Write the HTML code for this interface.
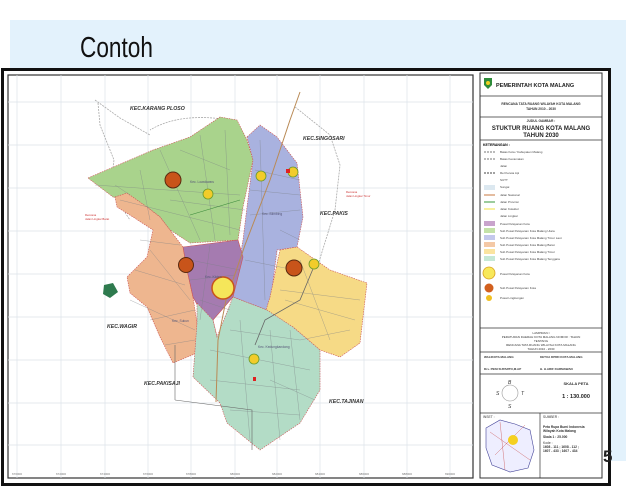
<!DOCTYPE html>
<html><head><meta charset="utf-8"><style>
html,body{margin:0;padding:0;background:#fff;width:638px;height:493px;overflow:hidden;position:relative;font-family:"Liberation Sans",sans-serif}
.panel{position:absolute;left:10px;top:20px;width:616px;height:441px;background:#e3f2fc}
.title{position:absolute;left:80px;top:32px;font-size:29px;color:#111;transform:scaleX(.78);transform-origin:left top;letter-spacing:0}
.num{position:absolute;left:603px;top:447px;font-size:17px;font-weight:bold;color:#222}
.frame{position:absolute;left:1px;top:68px;width:604px;height:412px;border:3px solid #111;background:#fff}
svg{position:absolute;left:0;top:0}
</style></head><body>
<div class="panel"></div>
<div class="title">Contoh</div>
<div class="frame"></div>
<div class="num">5</div>
<svg width="638" height="493" viewBox="0 0 638 493" font-family="Liberation Sans, sans-serif">
<rect x="8" y="75" width="465" height="403" fill="#fff" stroke="#333" stroke-width="1.2"/>
<g stroke="#dde3e8" stroke-width="0.7">
<line x1="17" y1="75" x2="17" y2="478"/><line x1="61" y1="75" x2="61" y2="478"/><line x1="105" y1="75" x2="105" y2="478"/><line x1="148" y1="75" x2="148" y2="478"/><line x1="191" y1="75" x2="191" y2="478"/><line x1="235" y1="75" x2="235" y2="478"/><line x1="277" y1="75" x2="277" y2="478"/><line x1="320" y1="75" x2="320" y2="478"/><line x1="364" y1="75" x2="364" y2="478"/><line x1="407" y1="75" x2="407" y2="478"/><line x1="450" y1="75" x2="450" y2="478"/>
<line x1="8" y1="102" x2="473" y2="102"/><line x1="8" y1="145" x2="473" y2="145"/><line x1="8" y1="188" x2="473" y2="188"/><line x1="8" y1="231" x2="473" y2="231"/><line x1="8" y1="274" x2="473" y2="274"/><line x1="8" y1="317" x2="473" y2="317"/><line x1="8" y1="360" x2="473" y2="360"/><line x1="8" y1="403" x2="473" y2="403"/><line x1="8" y1="445" x2="473" y2="445"/>
</g>
<g font-size="3" fill="#777"><text x="12" y="475">670000</text><text x="56" y="475">672000</text><text x="100" y="475">674000</text><text x="143" y="475">676000</text><text x="186" y="475">678000</text><text x="230" y="475">680000</text><text x="272" y="475">682000</text><text x="315" y="475">684000</text><text x="359" y="475">686000</text><text x="402" y="475">688000</text><text x="445" y="475">690000</text></g>
<g fill="none" stroke="#aaa" stroke-width="0.8" stroke-dasharray="2 1">
<path d="M98 103 L100 125 L114 160 L110 190 L130 220"/>
<path d="M295 107 L330 135 L340 165 L335 210 L318 265 L300 300"/>
<path d="M230 120 Q180 112 150 130"/>
<path d="M95 100 L120 118 L150 135"/>
</g>
<polygon points="88,178 153,150 190,137 220,117 237,120 247,140 253,160 243,207 238,240 190,243 170,230 160,217 147,207 113,197" fill="#a9d38c" stroke="#c55" stroke-width="0.6" stroke-dasharray="1.5 1"/>
<polygon points="247,137 260,125 277,137 297,163 303,217 297,247 277,250 272,290 267,310 233,297 243,240 247,207 253,160" fill="#a9b2df" stroke="#c55" stroke-width="0.6" stroke-dasharray="1.5 1"/>
<polygon points="115,197 127,193 147,207 160,217 170,230 183,247 187,270 193,297 197,323 197,353 173,363 160,337 147,307 130,293 127,277 147,257 153,230 133,217 117,207" fill="#eeb68f" stroke="#c55" stroke-width="0.6" stroke-dasharray="1.5 1"/>
<polygon points="183,247 238,240 243,257 233,297 213,320 217,337 207,323 193,297 187,270" fill="#a57bb0" stroke="#c55" stroke-width="0.6"/>
<polygon points="280,250 297,247 330,270 367,283 360,343 340,357 320,350 293,327 263,320 270,297" fill="#f6da86" stroke="#c55" stroke-width="0.6" stroke-dasharray="1.5 1"/>
<polygon points="197,303 213,320 217,337 233,297 267,310 293,327 320,350 320,390 300,423 260,450 227,423 220,403 193,377 197,323" fill="#b3dcc6" stroke="#c55" stroke-width="0.6" stroke-dasharray="1.5 1"/>
<polygon points="104,285 113,283 118,292 110,298 103,294" fill="#2e7a4e"/>
<g stroke="#7a7f84" stroke-width="0.4" fill="none" opacity="0.75">
<path d="M95 185 L240 195 M120 200 L240 230 M160 150 L200 240 M200 135 L215 240 M255 170 L300 180 M250 215 L300 210 M190 260 L240 270 M210 245 L200 320 M280 290 L360 300 M300 260 L330 340 M210 350 L310 370 M240 320 L250 440 M150 250 L190 300 M130 300 L195 330 M270 380 L315 400 M230 330 L300 340"/>
<path d="M140 170 L150 220 M180 150 L230 170 M170 200 L245 210 M225 130 L230 235 M260 140 L265 300 M250 190 L300 195 M245 260 L295 270 M280 230 L300 240 M140 240 L180 245 M135 270 L185 285 M150 320 L195 310 M165 345 L195 340 M285 300 L355 320 M300 340 L350 330 M210 380 L300 390 M230 410 L300 415 M270 330 L280 440 M290 330 L300 420 M115 185 L130 195 M190 280 L235 275 M200 300 L230 310"/>
</g>
<path d="M300 92 L290 120 L270 180 L245 245 L226 300 L218 340 L216 402" fill="none" stroke="#b98a55" stroke-width="1"/>
<path d="M175 345 L175 400 M175 400 L252 410 L252 450" fill="none" stroke="#666" stroke-width="0.6"/>
<path d="M255 345 L265 320 L300 300 L315 264" fill="none" stroke="#666" stroke-width="0.8"/>
<path d="M190 215 L240 200" fill="none" stroke="#3a8a3a" stroke-width="0.6"/>
<g stroke="#5a2a10" stroke-width="1"><circle cx="173" cy="180" r="8" fill="#c8541a"/><circle cx="186" cy="265" r="7.5" fill="#c8541a"/><circle cx="294" cy="268" r="8" fill="#c8541a"/></g>
<circle cx="223" cy="288" r="11" fill="#f5e65a" stroke="#c8541a" stroke-width="1.5"/>
<g fill="#f2cc2a" stroke="#6a9a2a" stroke-width="0.8"><circle cx="208" cy="194" r="5"/><circle cx="261" cy="176" r="5"/><circle cx="293" cy="172" r="5"/><circle cx="314" cy="264" r="5"/><circle cx="254" cy="359" r="5"/></g>
<rect x="286" y="169" width="4" height="4" fill="#e02020"/><rect x="253" y="377" width="3" height="4" fill="#e02020"/>
<g font-size="5.2" font-style="italic" font-weight="bold" fill="#333"><text x="130" y="110">KEC.KARANG PLOSO</text><text x="303" y="140">KEC.SINGOSARI</text><text x="320" y="215">KEC.PAKIS</text><text x="107" y="328">KEC.WAGIR</text><text x="144" y="385">KEC.PAKISAJI</text><text x="329" y="403">KEC.TAJINAN</text></g>
<g font-size="3.3" fill="#557"><text x="190" y="183">Kec. Lowokwaru</text><text x="262" y="215">Kec. Blimbing</text><text x="205" y="278">Kec. Klojen</text><text x="172" y="322">Kec. Sukun</text><text x="258" y="348">Kec. Kedungkandang</text></g>
<g font-size="2.8" fill="#c33"><text x="85" y="216">Rencana</text><text x="85" y="220">Jalan Lingkar Barat</text><text x="346" y="193">Rencana</text><text x="346" y="197">Jalan Lingkar Timur</text></g>
<rect x="480" y="73" width="122" height="405" fill="#fff" stroke="#333" stroke-width="1"/>
<g stroke="#333" stroke-width="0.7"><line x1="480" y1="96" x2="602" y2="96"/><line x1="480" y1="117" x2="602" y2="117"/><line x1="480" y1="140" x2="602" y2="140"/><line x1="480" y1="328" x2="602" y2="328"/><line x1="480" y1="352" x2="602" y2="352"/><line x1="480" y1="374" x2="602" y2="374"/><line x1="480" y1="413" x2="602" y2="413"/><line x1="540" y1="413" x2="540" y2="478"/></g>
<path d="M484 78 h8 v7 l-4 4 l-4 -4 z" fill="#2e8b3a"/><circle cx="488" cy="83" r="2" fill="#f0d020"/>
<text x="496" y="87" font-size="5.5" font-weight="bold" fill="#222">PEMERINTAH KOTA MALANG</text>
<g font-size="3.3" font-weight="bold" fill="#333" text-anchor="middle"><text x="541" y="105">RENCANA TATA RUANG WILAYAH KOTA MALANG</text><text x="541" y="110">TAHUN 2010 - 2030</text><text x="541" y="122">JUDUL GAMBAR :</text></g>
<g font-size="6" font-weight="bold" fill="#222" text-anchor="middle"><text x="541" y="130">STUKTUR RUANG KOTA MALANG</text><text x="541" y="137">TAHUN 2030</text></g>
<text x="483" y="146" font-size="3.5" font-weight="bold">KETERANGAN :</text>
<g font-size="3" fill="#444"><text x="500" y="153">Batas Kota / Kabupaten Malang</text><text x="500" y="160">Batas Kecamatan</text><text x="500" y="167">Jalan</text><text x="500" y="174">Rel Kereta Api</text><text x="500" y="181">SUTT</text><text x="500" y="188">Sungai</text><text x="500" y="196">Jalan Nasional</text><text x="500" y="203">Jalan Provinsi</text><text x="500" y="210">Jalan Kolektor</text><text x="500" y="217">Jalan Lingkar</text><text x="500" y="225">Pusat Pelayanan Kota</text><text x="500" y="232">Sub Pusat Pelayanan Kota Malang Utara</text><text x="500" y="239">Sub Pusat Pelayanan Kota Malang Timur Laut</text><text x="500" y="246">Sub Pusat Pelayanan Kota Malang Barat</text><text x="500" y="253">Sub Pusat Pelayanan Kota Malang Timur</text><text x="500" y="260">Sub Pusat Pelayanan Kota Malang Tenggara</text><text x="500" y="275">Pusat Pelayanan Kota</text><text x="500" y="289">Sub Pusat Pelayanan Kota</text><text x="500" y="299">Pusat Lingkungan</text></g>
<g stroke-width="1"><line x1="484" y1="152" x2="495" y2="152" stroke="#777" stroke-dasharray="2 1"/><line x1="484" y1="159" x2="495" y2="159" stroke="#777" stroke-dasharray="2 1"/><line x1="484" y1="173" x2="495" y2="173" stroke="#444" stroke-dasharray="2 1"/><line x1="484" y1="195" x2="495" y2="195" stroke="#c87a40"/><line x1="484" y1="202" x2="495" y2="202" stroke="#3a9a3a"/><line x1="484" y1="209" x2="495" y2="209" stroke="#f0e040"/></g>
<rect x="484" y="185" width="11" height="5" fill="#dce8f0"/>
<rect x="484" y="221" width="11" height="5" fill="#c9a4cc"/><rect x="484" y="228" width="11" height="5" fill="#c4e2a8"/><rect x="484" y="235" width="11" height="5" fill="#c4c8ec"/><rect x="484" y="242" width="11" height="5" fill="#f4c9a6"/><rect x="484" y="249" width="11" height="5" fill="#fbe4a0"/><rect x="484" y="256" width="11" height="5" fill="#c6e8d6"/>
<circle cx="489" cy="273" r="6" fill="#f8e85a" stroke="#d9a020" stroke-width="0.8"/><circle cx="489" cy="288" r="4.5" fill="#d2601e"/><circle cx="489" cy="298" r="3" fill="#f0c020"/>
<g font-size="3" fill="#333" text-anchor="middle"><text x="541" y="334">LAMPIRAN I</text><text x="541" y="338">PERATURAN DAERAH KOTA MALANG NOMOR : TAHUN</text><text x="541" y="342">TENTANG</text><text x="541" y="346">RENCANA TATA RUANG WILAYAH KOTA MALANG</text><text x="541" y="350">TAHUN 2010 - 2030</text></g>
<g font-size="3" font-weight="bold" fill="#333"><text x="484" y="358">WALIKOTA MALANG</text><text x="540" y="358">KETUA DPRD KOTA MALANG</text><text x="484" y="370">Drs. PENI SUPARTO,M.AP</text><text x="540" y="370">H. H.ARIF DARMAWAN</text></g>
<circle cx="510" cy="393" r="8" fill="none" stroke="#999" stroke-width="0.6"/>
<g font-size="5" font-style="italic" fill="#333"><text x="508" y="384">B</text><text x="496" y="395">S</text><text x="521" y="395">T</text><text x="508" y="408">S</text></g>
<text x="576" y="385" font-size="4" font-weight="bold" fill="#333" text-anchor="middle">SKALA PETA</text>
<text x="576" y="398" font-size="5.5" font-weight="bold" fill="#222" text-anchor="middle">1 : 130.000</text>
<path d="M486 428 L500 420 L515 424 L530 430 L534 450 L528 468 L510 472 L492 465 L486 448 Z" fill="#eef" stroke="#449" stroke-width="0.6"/><path d="M490 432 L530 460 M495 455 L525 425 M500 422 L505 470" stroke="#c55" stroke-width="0.4" fill="none"/><circle cx="513" cy="440" r="5" fill="#f5d020"/>
<g font-size="3.3" fill="#333"><text x="483" y="418">INSET :</text><text x="543" y="418">SUMBER :</text><text x="543" y="428" font-weight="bold">Peta Rupa Bumi Indonesia</text><text x="543" y="432" font-weight="bold">Wilayah Kota Malang</text><text x="543" y="438" font-weight="bold">Skala 1 : 25.000</text><text x="543" y="444">Kode :</text><text x="543" y="448" font-weight="bold">1608 - 111 ; 1608 - 112 ;</text><text x="543" y="452" font-weight="bold">1607 - 433 ; 1607 - 434</text></g>
</svg>
</body></html>
